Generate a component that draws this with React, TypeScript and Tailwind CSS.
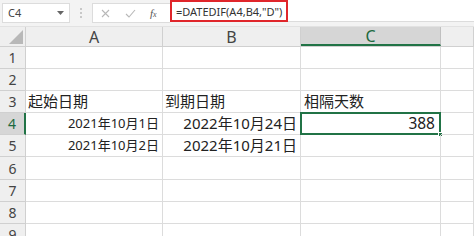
import React from 'react'

const cols = [
  { key: 'A', w: 'w-[137px]' },
  { key: 'B', w: 'w-[138px]' },
  { key: 'C', w: 'w-[140px]' },
  { key: 'D', w: 'flex-1' },
]

type Cell = { text: string; cls?: string }

const rows: { n: number; h: string; cells: Record<string, Cell> }[] = [
  { n: 1, h: 'h-[22px]', cells: {} },
  { n: 2, h: 'h-[22px]', cells: {} },
  {
    n: 3,
    h: 'h-[22px]',
    cells: {
      A: { text: '起始日期', cls: 'justify-start pl-[2px] text-[15px]' },
      B: { text: '到期日期', cls: 'justify-start pl-[2px] text-[15px]' },
      C: { text: '相隔天数', cls: 'justify-start pl-[3px] text-[15px]' },
    },
  },
  {
    n: 4,
    h: 'h-[22px]',
    cells: {
      A: { text: '2021年10月1日', cls: 'justify-end pr-[3px] text-[13px]' },
      B: { text: '2022年10月24日', cls: 'justify-end pr-[3px] text-[15px]' },
      C: { text: '388', cls: 'justify-end pr-[5px] text-[15.5px]' },
    },
  },
  {
    n: 5,
    h: 'h-[22px]',
    cells: {
      A: { text: '2021年10月2日', cls: 'justify-end pr-[3px] text-[13px]' },
      B: { text: '2022年10月21日', cls: 'justify-end pr-[3px] text-[15px]' },
    },
  },
  { n: 6, h: 'h-[23px]', cells: {} },
  { n: 7, h: 'h-[22px]', cells: {} },
  { n: 8, h: 'h-[22px]', cells: {} },
  { n: 9, h: 'h-[22px]', cells: {} },
]

const font = { fontFamily: '"Noto Sans", "Noto Sans CJK SC", sans-serif' }

export default function App() {
  return (
    <div className="w-[474px] h-[236px] overflow-hidden bg-white text-[#333]" style={font}>
      {/* Formula bar */}
      <div className="h-[27px] bg-[#f3f3f3] flex items-start pt-[3px] border-b border-[#e2e2e2]">
        <div className="ml-[2px] w-[68px] h-[20px] bg-white border border-[#dcdcdc] flex items-center justify-between px-[5px] text-[11px] text-[#444]">
          <span>C4</span>
          <svg width="7" height="4" viewBox="0 0 7 4"><path d="M0 0h7L3.5 4z" fill="#666" /></svg>
        </div>
        <div className="w-[22px] h-[20px] flex flex-col items-center justify-center gap-[2px]">
          <span className="w-[2px] h-[2px] bg-[#c8c8c8]" />
          <span className="w-[2px] h-[2px] bg-[#c8c8c8]" />
          <span className="w-[2px] h-[2px] bg-[#c8c8c8]" />
        </div>
        <div className="w-[78px] h-[20px] bg-white border border-[#dcdcdc] border-r-0 flex items-center">
          <svg className="ml-[8px]" width="9" height="9" viewBox="0 0 9 9"><path d="M1 1l7 7M8 1L1 8" stroke="#b8b8b8" strokeWidth="1.1" /></svg>
          <svg className="ml-[15px]" width="11" height="9" viewBox="0 0 11 9"><path d="M1 5l3 3 6-7" stroke="#b8b8b8" strokeWidth="1.1" fill="none" /></svg>
          <span className="ml-[14px] italic text-[11px] text-[#555]" style={{ fontFamily: '"Liberation Serif", serif' }}>
            f<span className="text-[8px]">x</span>
          </span>
        </div>
        <div className="flex-1 h-[22px] -mt-[3px] bg-white flex items-stretch">
          <div className="w-[118px] border-2 border-[#e0262b] flex items-center pl-[4px] text-[11px] text-[#333] pt-[2px]">
            =DATEDIF(A4,B4,"D")
          </div>
          <div className="flex-1 border-b border-[#dcdcdc]" />
        </div>
      </div>

      {/* Column headers */}
      <div className="flex h-[20px] bg-[#efefef] border-b border-[#d0d0d0]">
        <div className="w-[26px] border-r border-[#d0d0d0] flex items-end justify-end p-[2px]">
          <svg width="14" height="14" viewBox="0 0 14 14"><path d="M14 0v14H0z" fill="#b8b8b8" /></svg>
        </div>
        {cols.map((c) => (
          <div
            key={c.key}
            className={`${c.w} flex items-center justify-center text-[16px] border-r ${
              c.key === 'C'
                ? 'bg-[#d6d6d6] text-[#1d6a3e] border-[#c0c0c0] border-b-2 border-b-[#217346]'
                : 'text-[#444] border-[#d0d0d0]'
            }`}
          >
            {c.key === 'D' ? '' : c.key}
          </div>
        ))}
      </div>

      {/* Rows */}
      {rows.map((r) => (
        <div key={r.n} className={`flex ${r.h}`}>
          <div
            className={`w-[26px] flex items-center justify-center text-[14px] border-b border-[#d0d0d0] ${
              r.n === 4
                ? 'bg-[#d6d6d6] text-[#1d6a3e] border-r-2 border-r-[#217346]'
                : 'bg-[#efefef] text-[#444] border-r border-r-[#d0d0d0]'
            }`}
          >
            {r.n}
          </div>
          {cols.map((c) => {
            const cell = r.cells[c.key]
            const sel = r.n === 4 && c.key === 'C'
            return (
              <div
                key={c.key}
                className={`${c.w} relative flex items-center border-r border-b border-[#dcdcdc] text-[#222] whitespace-nowrap ${cell?.cls ?? ''}`}
              >
                {cell?.text}
                {sel && (
                  <>
                    <div className="absolute -left-px -top-px -right-px -bottom-px border-2 border-[#217346]" />
                    <div className="absolute -right-[3px] -bottom-[3px] w-[5px] h-[5px] bg-[#217346] border border-white" />
                  </>
                )}
              </div>
            )
          })}
        </div>
      ))}
    </div>
  )
}
